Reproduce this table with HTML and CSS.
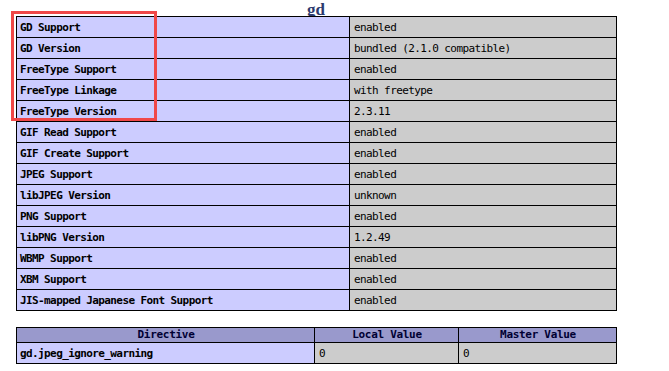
FILE: index.html
```html
<!DOCTYPE html>
<html lang="en">
<head>
    <meta charset="UTF-8">
    <title>phpinfo - gd</title>
    <link rel="stylesheet" href="styles.css">
</head>
<body>
    <div class="center">
        <h2 class="module-title"><a name="module_gd">gd</a></h2>

        <div class="info-block">
            <table class="info">
                <colgroup>
                    <col class="col-e">
                    <col class="col-v">
                </colgroup>
                <tr><td class="e">GD Support </td><td class="v">enabled </td></tr>
                <tr><td class="e">GD Version </td><td class="v">bundled (2.1.0 compatible) </td></tr>
                <tr><td class="e">FreeType Support </td><td class="v">enabled </td></tr>
                <tr><td class="e">FreeType Linkage </td><td class="v">with freetype </td></tr>
                <tr><td class="e">FreeType Version </td><td class="v">2.3.11 </td></tr>
                <tr><td class="e">GIF Read Support </td><td class="v">enabled </td></tr>
                <tr><td class="e">GIF Create Support </td><td class="v">enabled </td></tr>
                <tr><td class="e">JPEG Support </td><td class="v">enabled </td></tr>
                <tr><td class="e">libJPEG Version </td><td class="v">unknown </td></tr>
                <tr><td class="e">PNG Support </td><td class="v">enabled </td></tr>
                <tr><td class="e">libPNG Version </td><td class="v">1.2.49 </td></tr>
                <tr><td class="e">WBMP Support </td><td class="v">enabled </td></tr>
                <tr><td class="e">XBM Support </td><td class="v">enabled </td></tr>
                <tr><td class="e">JIS-mapped Japanese Font Support </td><td class="v">enabled </td></tr>
            </table>
            <!-- highlight box around the first five rows -->
            <div class="highlight"></div>
        </div>

        <table class="info directives">
            <colgroup>
                <col class="col-d">
                <col class="col-l">
                <col class="col-m">
            </colgroup>
            <tr class="h"><th>Directive</th><th>Local Value</th><th>Master Value</th></tr>
            <tr><td class="e">gd.jpeg_ignore_warning</td><td class="v">0</td><td class="v">0</td></tr>
        </table>
    </div>
</body>
</html>
```

FILE: styles.css
```css
body {
    margin: 0;
    background-color: #ffffff;
    color: #000000;
    font-family: "DejaVu Sans Mono", "Liberation Mono", monospace;
}

.center {
    width: 600px;
    margin-left: 16px;
}

.module-title {
    margin: 0;
    height: 16px;
    font-family: "Liberation Serif", serif;
    font-size: 17px;
    font-weight: bold;
    line-height: 19px;
    text-align: center;
    overflow: visible;
}

.module-title a {
    color: #2b3a6e;
    text-decoration: none;
}

.info-block {
    position: relative;
}

table.info {
    border-collapse: collapse;
    table-layout: fixed;
    width: 600px;
}

.info td,
.info th {
    border: 1px solid #000000;
    font-size: 11px;
    letter-spacing: -0.6px;
    height: 19px;
    line-height: 19px;
    padding: 1px 3px 0 4px;
    vertical-align: middle;
    white-space: nowrap;
}

.col-e { width: 333px; }
.col-v { width: 267px; }

.e {
    background-color: #ccccff;
    font-weight: bold;
    letter-spacing: -0.3px;
}

.info .e {
    padding-left: 3px;
}

.v {
    background-color: #cccccc;
}

/* second table: directive list */
.directives {
    margin-top: 16px;
}

.col-d { width: 298px; }
.col-l { width: 144px; }
.col-m { width: 158px; }

.directives .h th {
    background-color: #9999cc;
    color: #000033;
    font-weight: bold;
    letter-spacing: -0.3px;
    height: 14px;
    line-height: 14px;
    padding-top: 0;
    text-align: center;
}

.highlight {
    position: absolute;
    left: -5px;
    top: -5px;
    width: 140px;
    height: 104px;
    border: 3px solid #f04848;
    pointer-events: none;
}
```
